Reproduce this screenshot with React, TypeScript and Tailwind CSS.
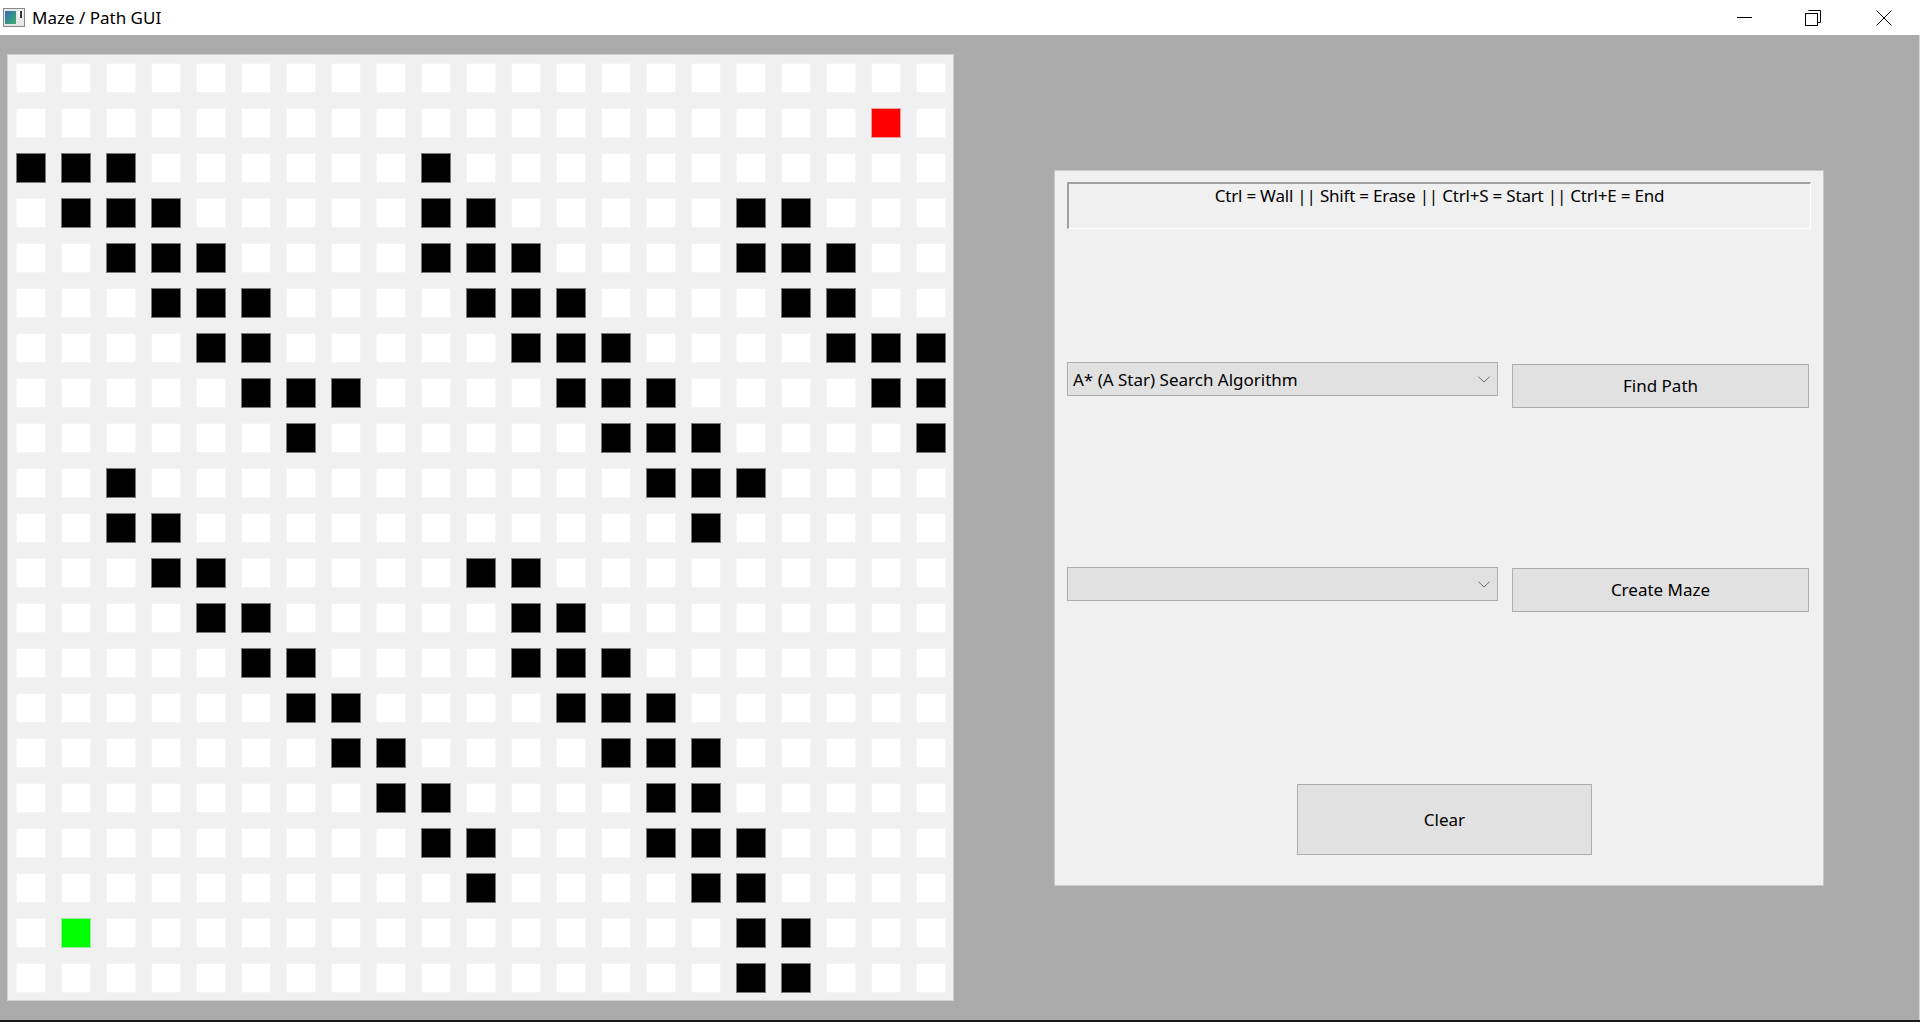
import React from "react";

// --- grid data ---
const SIZE = 21;
const walls: number[][] = [
  [],
  [],
  [0, 1, 2, 9],
  [1, 2, 3, 9, 10, 16, 17],
  [2, 3, 4, 9, 10, 11, 16, 17, 18],
  [3, 4, 5, 10, 11, 12, 17, 18],
  [4, 5, 11, 12, 13, 18, 19, 20],
  [5, 6, 7, 12, 13, 14, 19, 20],
  [6, 13, 14, 15, 20],
  [2, 14, 15, 16],
  [2, 3, 15],
  [3, 4, 10, 11],
  [4, 5, 11, 12],
  [5, 6, 11, 12, 13],
  [6, 7, 12, 13, 14],
  [7, 8, 13, 14, 15],
  [8, 9, 14, 15],
  [9, 10, 14, 15, 16],
  [10, 15, 16],
  [16, 17],
  [16, 17],
];
const END = { r: 1, c: 19 };
const START = { r: 19, c: 1 };

const font = { fontFamily: '"Noto Sans", "Open Sans", sans-serif' };

function Cell({ r, c }: { r: number; c: number }) {
  let cls = "bg-white border border-[#f4f4f4]";
  if (r === END.r && c === END.c) cls = "bg-[#ff0000] border border-[#e8a0a0]";
  else if (r === START.r && c === START.c) cls = "bg-[#00ff00] border border-[#a0e8a0]";
  else if (walls[r].includes(c)) cls = "bg-black border border-[#7a7a7a]";
  return (
    <div className="w-[45px] h-[45px] flex items-center justify-center">
      <div className={`w-[30px] h-[30px] ${cls}`} />
    </div>
  );
}

function Chevron() {
  return (
    <svg width="12" height="7" viewBox="0 0 12 7" className="shrink-0">
      <path d="M0.5 0.8 L6 6 L11.5 0.8" fill="none" stroke="#6a6a6a" strokeWidth="1" />
    </svg>
  );
}

function Combo({ value }: { value?: string }) {
  return (
    <div className="w-[431px] h-[34px] bg-[#e1e1e1] border border-[#adadad] flex items-center pl-[5px] pr-[7px]">
      <span className="flex-1 text-[17px] text-black leading-none">{value}</span>
      <Chevron />
    </div>
  );
}

function Button({ label, className }: { label: string; className: string }) {
  return (
    <button className={`bg-[#e1e1e1] border border-[#adadad] text-[17px] text-black flex items-center justify-center ${className}`}>
      {label}
    </button>
  );
}

export default function App() {
  return (
    <div className="w-[1920px] h-[1022px] flex flex-col bg-[#ababab] overflow-hidden" style={font}>
      {/* title bar */}
      <div className="h-[35px] bg-white flex items-center shrink-0">
        <svg width="22" height="19" viewBox="0 0 22 19" className="ml-[3px]">
          <rect x="0.5" y="0.5" width="21" height="18" fill="#e8e8e8" stroke="#8a8a8a" />
          <defs>
            <linearGradient id="ig" x1="0" y1="0" x2="1" y2="1">
              <stop offset="0" stopColor="#2f6fb8" />
              <stop offset="1" stopColor="#3fae6a" />
            </linearGradient>
          </defs>
          <rect x="2" y="3" width="11" height="13" fill="url(#ig)" />
          <rect x="15" y="3" width="5" height="6" fill="#ffffff" />
          <rect x="17" y="3" width="2" height="7" fill="#333" />
        </svg>
        <span className="ml-[7px] text-[17px] text-black">Maze / Path GUI</span>
        <div className="ml-auto flex items-center h-full">
          <div className="w-[56px] h-full flex items-center justify-center mr-[13px]">
            <div className="w-[15px] h-px bg-black" />
          </div>
          <div className="w-[56px] h-full flex items-center justify-center mr-[15px]">
            <svg width="16" height="16" viewBox="0 0 16 16">
              <path d="M3.5 0.5 H15.5 V12.5 H12.5" fill="none" stroke="#000" />
              <rect x="0.5" y="3.5" width="12" height="12" fill="none" stroke="#000" />
            </svg>
          </div>
          <div className="w-[56px] h-full flex items-center justify-center mr-[8px]">
            <svg width="16" height="16" viewBox="0 0 16 16">
              <path d="M0.5 0.5 L15.5 15.5 M15.5 0.5 L0.5 15.5" stroke="#000" strokeWidth="1" />
            </svg>
          </div>
        </div>
      </div>

      {/* body */}
      <div className="flex-1 flex items-start pl-[7px] pt-[19px] border-r border-[#d6d6d6]">
        <div className="bg-[#f0f0f0] border border-[#d2d2d2]">
          <div className="grid grid-cols-[repeat(21,45px)]">
            {Array.from({ length: SIZE * SIZE }, (_, i) => (
              <Cell key={i} r={Math.floor(i / SIZE)} c={i % SIZE} />
            ))}
          </div>
        </div>

        <div className="ml-[100px] mt-[116px] w-[770px] h-[716px] bg-[#f0f0f0] border border-[#c8c8c8] flex flex-col pt-[11px] px-[12px]">
          <div className="h-[47px] border-t-2 border-l-2 border-t-[#a0a0a0] border-l-[#a0a0a0] border-b border-r border-b-white border-r-white flex justify-center">
            <span className="text-[17px] text-black leading-[24px] tracking-[-0.2px]">
              Ctrl = Wall || Shift = Erase || Ctrl+S = Start || Ctrl+E = End
            </span>
          </div>

          <div className="mt-[133px] flex items-start">
            <Combo value="A* (A Star) Search Algorithm" />
            <Button label="Find Path" className="ml-[14px] mt-[2px] w-[297px] h-[44px]" />
          </div>

          <div className="mt-[159px] flex items-start">
            <Combo />
            <Button label="Create Maze" className="ml-[14px] mt-[1px] w-[297px] h-[44px]" />
          </div>

          <Button label="Clear" className="mt-[172px] ml-[230px] w-[295px] h-[71px]" />
        </div>
      </div>
      <div className="h-[2px] bg-[#1a1a1a] shrink-0" />
    </div>
  );
}
